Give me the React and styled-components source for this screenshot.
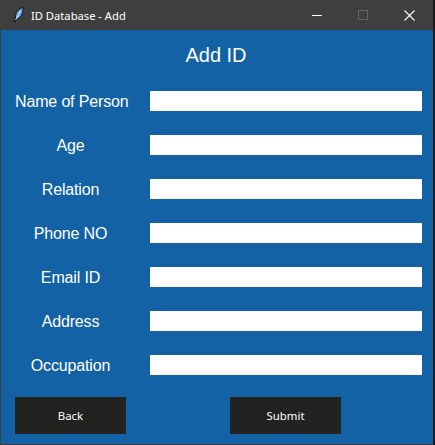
import React from "react";
import styled, { createGlobalStyle } from "styled-components";

const GlobalStyle = createGlobalStyle`
  html, body {
    margin: 0;
    padding: 0;
    background-color: #1a1a1a;
  }
`;

const Window = styled.div`
  width: 433px;
  height: 445px;
  display: flex;
  flex-direction: column;
  box-sizing: border-box;
  padding: 0 0 1px 1px;
  background-color: #3f3f3f;
  overflow: hidden;
`;

const TitleBar = styled.div`
  height: 30px;
  flex-shrink: 0;
  display: flex;
  align-items: center;
  padding-right: 1px;
  color: #ffffff;
  font-family: "Noto Sans", sans-serif;
  font-size: 11.2px;
`;

const TitleIcon = styled.svg`
  width: 12px;
  height: 16px;
  margin: 0 7px 0 11px;
`;

const TitleText = styled.div`
  flex: 1;
`;

const WinButton = styled.div`
  width: 46px;
  height: 30px;
  display: flex;
  align-items: center;
  justify-content: center;
`;

const Panel = styled.div`
  flex: 1;
  display: flex;
  flex-direction: column;
  background-color: #1262a5;
  padding: 0 11px 0 14px;
`;

const Heading = styled.div`
  margin-top: 13px;
  height: 24px;
  line-height: 24px;
  padding-right: 5px;
  text-align: center;
  color: #ffffff;
  font-family: "Liberation Sans", Arial, sans-serif;
  font-size: 20px;
`;

const Rows = styled.div`
  margin-top: 24px;
  display: flex;
  flex-direction: column;
  gap: 24px;
`;

const Row = styled.div`
  display: flex;
  align-items: center;
  height: 20px;
`;

const Label = styled.div`
  width: 111px;
  margin-right: 24px;
  padding-top: 2px;
  text-align: center;
  color: #ffffff;
  font-family: "Liberation Sans", Arial, sans-serif;
  font-size: 16px;
  letter-spacing: -0.15px;
  white-space: nowrap;
`;

const Field = styled.input`
  flex: 1;
  min-width: 0;
  height: 20px;
  box-sizing: border-box;
  border: none;
  padding: 0 2px;
  background-color: #ffffff;
`;

const Buttons = styled.div`
  margin-top: 22px;
  display: flex;
  gap: 104px;
`;

const ActionButton = styled.button`
  width: 111px;
  height: 37px;
  border: none;
  padding: 0;
  background-color: #222220;
  color: #ffffff;
  font-family: "Noto Sans", sans-serif;
  font-size: 11.4px;
`;

const fields = ["Name of Person", "Age", "Relation", "Phone NO", "Email ID", "Address", "Occupation"];

export default function App() {
  return (
    <Window>
      <GlobalStyle />
      <TitleBar>
        <TitleIcon viewBox="0 0 12 16">
          <path d="M2.5 15.5 L3.5 10 C3.6 5.5 6.5 1.8 11 0.5 C11.5 5 9.5 10 5.5 12 L3.6 12 Z" fill="#6fa8e8" stroke="#10131a" strokeWidth="1" />
          <path d="M3.5 13 L8.5 4" stroke="#dcebff" strokeWidth="0.8" />
        </TitleIcon>
        <TitleText>ID Database - Add</TitleText>
        <WinButton>
          <svg width="10" height="10" viewBox="0 0 10 10">
            <path d="M0 5.5 H10" stroke="#ffffff" strokeWidth="1" />
          </svg>
        </WinButton>
        <WinButton>
          <svg width="10" height="10" viewBox="0 0 10 10">
            <rect x="0.5" y="0.5" width="9" height="9" fill="none" stroke="#656565" strokeWidth="1" />
          </svg>
        </WinButton>
        <WinButton>
          <svg width="11" height="11" viewBox="0 0 11 11">
            <path d="M0.5 0.5 L10.5 10.5 M10.5 0.5 L0.5 10.5" stroke="#ffffff" strokeWidth="1.1" />
          </svg>
        </WinButton>
      </TitleBar>
      <Panel>
        <Heading>Add ID</Heading>
        <Rows>
          {fields.map((name) => (
            <Row key={name}>
              <Label>{name}</Label>
              <Field />
            </Row>
          ))}
        </Rows>
        <Buttons>
          <ActionButton>Back</ActionButton>
          <ActionButton>Submit</ActionButton>
        </Buttons>
      </Panel>
    </Window>
  );
}
